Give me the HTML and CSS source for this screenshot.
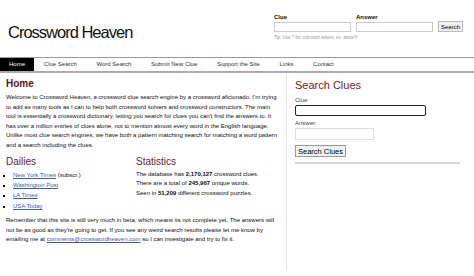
FILE: index.html
```html
<!DOCTYPE html>
<html lang="en">

<head>
    <meta charset="UTF-8">
    <title>Crossword Heaven</title>
    <link rel="stylesheet" href="styles.css">
</head>

<body>
    <div id="header">
        <h1 class="logo">Crossword Heaven</h1>
        <form class="quick-search">
            <div class="qs-fields">
                <label class="qs-field">
                    <span>Clue</span>
                    <input type="text" class="qs-input">
                </label>
                <label class="qs-field">
                    <span>Answer</span>
                    <input type="text" class="qs-input">
                </label>
                <button type="button" class="qs-btn">Search</button>
            </div>
            <p class="qs-tip">Tip: Use ? for unknown letters, ex: answ?r</p>
        </form>
    </div>

    <ul id="nav">
        <li class="active"><a href="#">Home</a></li>
        <li><a href="#">Clue Search</a></li>
        <li><a href="#">Word Search</a></li>
        <li><a href="#">Submit New Clue</a></li>
        <li><a href="#">Support the Site</a></li>
        <li><a href="#">Links</a></li>
        <li><a href="#">Contact</a></li>
    </ul>

    <div id="main">
        <div id="content">
            <h2 class="page-title">Home</h2>
            <p>Welcome to Crossword Heaven, a crossword clue search engine by a crossword aficionado. I'm trying
                to add as many tools as I can to help both crossword solvers and crossword constructors. The main
                tool is essentially a crossword dictionary, letting you search for clues you can't find the answers to. It
                has over a million entries of clues alone, not to mention almost every word in the English language.
                Unlike most clue search engines, we have both a pattern matching search for matching a word pattern
                and a search including the clues.</p>

            <div class="cols">
                <div class="col">
                    <h3>Dailies</h3>
                    <ul class="dailies">
                        <li><a href="#">New York Times</a> (subscr.)</li>
                        <li><a href="#">Washington Post</a></li>
                        <li><a href="#">LA Times</a></li>
                        <li><a href="#">USA Today</a></li>
                    </ul>
                </div>
                <div class="col">
                    <h3>Statistics</h3>
                    <p class="stats">The database has <b>2,170,127</b> crossword clues.<br>
                        There are a total of <b>245,967</b> unique words.<br>
                        Seen in <b>51,209</b> different crossword puzzles.</p>
                </div>
            </div>

            <p class="note">Remember that this site is still very much in beta, which means its not complete yet. The answers will
                not be as good as they're going to get. If you see any weird search results please let me know by
                emailing me at <a href="#">comments@crosswordheaven.com</a> so I can investigate and try to fix it.</p>
        </div>

        <div id="sidebar">
            <h3>Search Clues</h3>
            <label class="sb-label">Clue:</label>
            <input type="text" class="sb-clue">
            <label class="sb-label">Answer:</label>
            <input type="text" class="sb-answer">
            <button type="button" class="sb-btn">Search Clues</button>
            <div class="sb-rule"></div>
        </div>
    </div>
</body>

</html>
```

FILE: styles.css
```css
* {
    padding: 0;
    margin: 0;
    box-sizing: border-box;
}

body {
    font-family: 'Liberation Sans', Arial, sans-serif;
    font-size: 6px;
    color: #0d0d0d;
    background-color: #ffffff;
}

a {
    color: #3a5ba8;
}

#header {
    display: flex;
    justify-content: space-between;
    height: 57px;
}

.logo {
    font-weight: normal;
    font-size: 16.5px;
    letter-spacing: -1px;
    color: #111111;
    margin: 23px 0 0 8px;
}

.quick-search {
    margin: 14px 11px 0 0;
}

.qs-fields {
    display: flex;
    align-items: flex-end;
    gap: 5px;
}

.qs-field {
    display: flex;
    flex-direction: column;
    gap: 2px;
    font-weight: bold;
    font-size: 6px;
}

.qs-input {
    width: 77px;
    height: 10px;
    border: 1px solid #cccccc;
}

.qs-btn {
    height: 11px;
    padding: 0 2px;
    font-family: 'Liberation Sans', Arial, sans-serif;
    font-size: 6px;
    background-color: #f0f0f0;
    border: 1px solid #bbbbbb;
}

.qs-tip {
    font-size: 4.5px;
    color: #999999;
    margin-top: 3px;
}

#nav {
    list-style: none;
    display: flex;
    height: 16px;
    border-top: 1px solid #999999;
    border-bottom: 2px solid #aaaaaa;
}

#nav li a {
    display: block;
    height: 100%;
    line-height: 13px;
    padding: 0 9.8px;
    color: #333333;
    text-decoration: none;
    font-size: 6px;
}

#nav li.active a {
    background-color: #000000;
    color: #ffffff;
    width: 34px;
    padding: 0;
    text-align: center;
}

#main {
    display: flex;
}

#content {
    width: 287px;
    padding: 5px 7px 0 6px;
    border-right: 1px solid #e4e4e4;
    height: 197px;
}

#content p {
    line-height: 9.6px;
}

.page-title {
    font-size: 10px;
    color: #5e1010;
    margin-bottom: 4px;
}

h3 {
    font-weight: normal;
    font-size: 10px;
    color: #6e2222;
}

.cols {
    display: flex;
    margin-top: 5px;
}

.col {
    width: 130px;
}

.dailies {
    margin: 3px 0 0 7px;
    list-style: square;
}

.dailies li {
    line-height: 10.4px;
}

#content .stats {
    margin-top: 3px;
    line-height: 9.6px;
}

#content .note {
    margin-top: 5px;
    line-height: 9.4px;
}

#sidebar {
    width: 173px;
    padding: 6px 0 0 8px;
    display: flex;
    flex-direction: column;
    align-items: flex-start;
}

#sidebar h3 {
    font-size: 11px;
    margin-bottom: 6px;
}

.sb-label {
    font-size: 6px;
    color: #444444;
    margin-bottom: 2px;
}

.sb-clue {
    width: 131px;
    height: 11px;
    border: 1px solid #222222;
    border-radius: 2px;
    margin-bottom: 4px;
}

.sb-answer {
    width: 79px;
    height: 12px;
    border: 1px solid #dddddd;
    margin-bottom: 5px;
}

.sb-btn {
    font-family: 'Liberation Sans', Arial, sans-serif;
    font-size: 7.5px;
    height: 12px;
    padding: 0 2px;
    background-color: #f2f2f2;
    border: 1px solid #999999;
}

.sb-rule {
    width: 165px;
    height: 2px;
    background-color: #d8d8d8;
    margin-top: 5px;
}
```
